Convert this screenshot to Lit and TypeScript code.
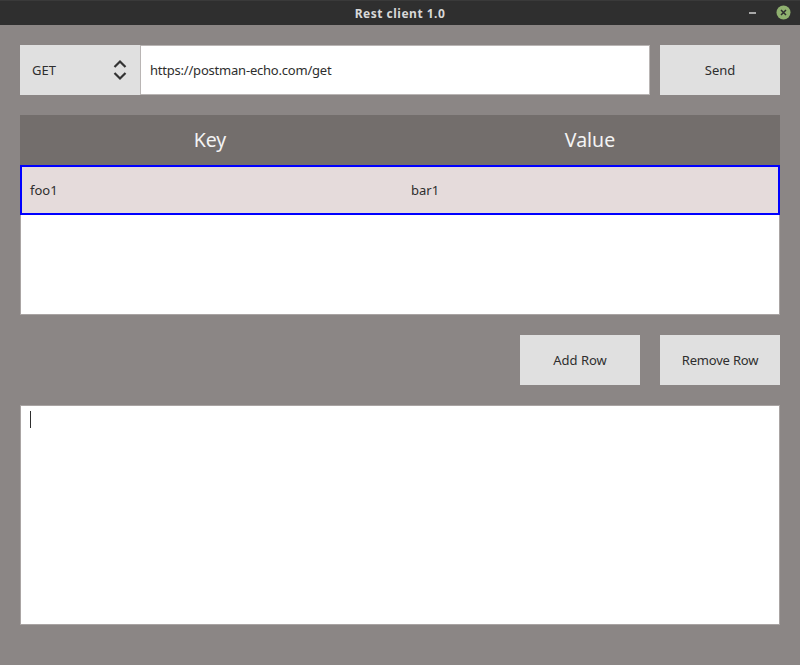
import { LitElement, html, css } from "lit";
import { customElement } from "lit/decorators.js";

@customElement("app-root")
export class AppRoot extends LitElement {
  static styles = css`
    :host {
      display: block;
      width: 800px;
      height: 665px;
      overflow: hidden;
      background: #8b8685;
      font-family: "Noto Sans", "Open Sans", sans-serif;
      font-size: 13px;
      color: #2e2e2e;
    }
    .titlebar {
      height: 25px;
      box-sizing: border-box;
      background: #2f2f2f;
      border-top: 1px solid #3a3a3a;
      color: #d8d8d8;
      font-size: 12px;
      font-weight: 700;
      letter-spacing: 0.5px;
      display: flex;
      align-items: center;
      justify-content: center;
      position: relative;
    }
    .controls {
      position: absolute;
      top: 4px;
      right: 9px;
      display: flex;
      align-items: center;
      gap: 20px;
      height: 15px;
    }
    .min {
      width: 7px;
      height: 2px;
      background: #a8a8a8;
    }
    .close {
      display: block;
      width: 15px;
      height: 15px;
    }
    .content {
      padding: 20px;
      display: flex;
      flex-direction: column;
      gap: 20px;
    }
    .request {
      display: flex;
      height: 50px;
    }
    .select {
      width: 120px;
      box-sizing: border-box;
      background: #e0e0e0;
      padding: 0 12px;
      display: flex;
      align-items: center;
      justify-content: space-between;
    }
    .updown {
      display: block;
      width: 16px;
      height: 24px;
    }
    .url {
      width: 510px;
      box-sizing: border-box;
      background: #fff;
      border: 1px solid #b9b5b4;
      padding: 0 9px;
      display: flex;
      align-items: center;
      letter-spacing: -0.21px;
    }
    .btn {
      width: 120px;
      height: 50px;
      background: #e0e0e0;
      display: flex;
      align-items: center;
      justify-content: center;
    }
    .send {
      margin-left: 10px;
    }
    .tight {
      letter-spacing: -0.2px;
    }
    .table {
      height: 200px;
      background: #fff;
      box-shadow: inset 1px 0 0 #a9a4a3, inset -1px 0 0 #a9a4a3, inset 0 -1px 0 #a9a4a3;
    }
    .thead {
      height: 50px;
      box-sizing: border-box;
      padding-bottom: 2px;
      background: #736e6c;
      color: #f4f4f4;
      font-size: 19.5px;
      display: grid;
      grid-template-columns: 380px 380px;
      align-items: center;
      text-align: center;
    }
    .row {
      height: 50px;
      box-sizing: border-box;
      background: #e5dbdb;
      border: 2px solid #0000ff;
      display: grid;
      grid-template-columns: 381px 1fr;
      align-items: center;
      padding: 0 8px;
    }
    .actions {
      display: flex;
      justify-content: flex-end;
      gap: 20px;
    }
    .editor {
      height: 220px;
      box-sizing: border-box;
      background: #fff;
      border: 1px solid #a9a4a3;
      padding: 5px 9px;
    }
    .caret {
      width: 1px;
      height: 17px;
      background: #2e2e2e;
    }
  `;

  render() {
    return html`
      <div class="titlebar">
        <span>Rest client 1.0</span>
        <div class="controls">
          <div class="min"></div>
          <svg class="close" viewBox="0 0 15 15">
            <circle cx="7.5" cy="7.5" r="7" fill="#8fb06f"></circle>
            <path d="M5 5l5 5M10 5l-5 5" stroke="#2f2f2f" stroke-width="1.5" fill="none"></path>
          </svg>
        </div>
      </div>
      <div class="content">
        <div class="request">
          <div class="select">
            <span>GET</span>
            <svg class="updown" viewBox="0 0 16 24">
              <path d="M2.5 9L8 3.5 13.5 9M2.5 15L8 20.5 13.5 15" stroke="#333" stroke-width="2.2" fill="none"></path>
            </svg>
          </div>
          <div class="url">https://postman-echo.com/get</div>
          <div class="btn send">Send</div>
        </div>
        <div class="table">
          <div class="thead"><span>Key</span><span>Value</span></div>
          <div class="row"><span>foo1</span><span>bar1</span></div>
        </div>
        <div class="actions">
          <div class="btn">Add Row</div>
          <div class="btn tight">Remove Row</div>
        </div>
        <div class="editor"><div class="caret"></div></div>
      </div>
    `;
  }
}
